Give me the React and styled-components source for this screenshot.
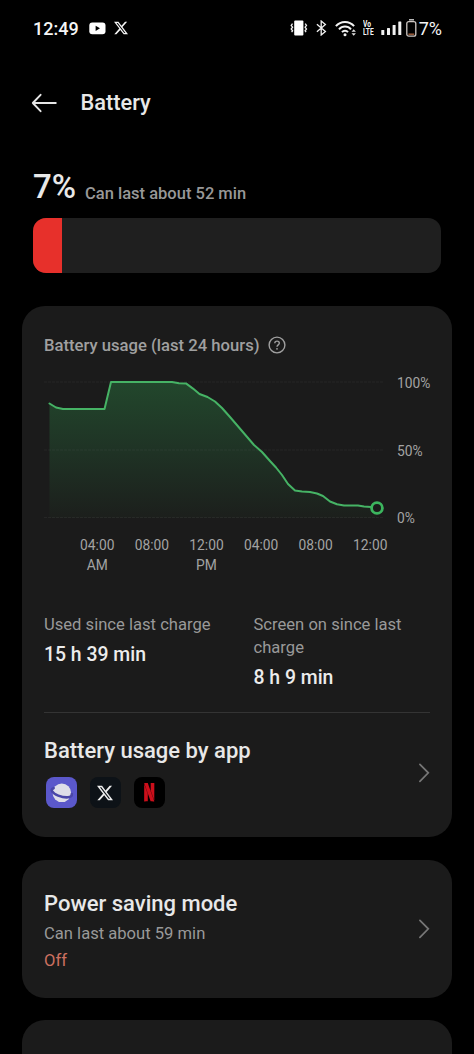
import React from 'react';
import styled, { createGlobalStyle } from 'styled-components';
import { SiX, SiNetflix } from 'react-icons/si';

const levels = [
  [5.5, 28.5], [12, 32.5], [19, 34], [60.5, 34], [67, 7], [128, 7], [135, 8.2], [142, 8.4],
  [149, 13.6], [155.5, 19], [163.5, 22], [171, 26.5], [178, 33], [186, 42], [210, 70], [218, 77],
  [226, 86], [232, 92.5], [238, 100], [244, 109], [251, 115.5], [258, 116.5], [266, 117],
  [273, 118.5], [279, 121], [286, 126.5], [293, 129.3], [300, 130.5], [314, 130.5], [320, 131.5], [327, 132],
]

const hours = ['04:00 AM', '08:00', '12:00 PM', '04:00', '08:00', '12:00']

const Chart = () => {
  const line = levels.map( p => p.join(',') ).join(' ')
  return (
    <svg width="342" height="150" viewBox="0 0 342 150">
      <defs>
        <linearGradient id="fade" x1="0" y1="0" x2="0" y2="1">
          <stop offset="0" stopColor="#22472c" />
          <stop offset="0.5" stopColor="#1f3325" />
          <stop offset="1" stopColor="#1c1f1c" />
        </linearGradient>
      </defs>
      <polygon points={`5.5,143 ${line} 333,133 333,143`} fill="url(#fade)" />
      { [7, 75, 142.5].map( y => (
        <line key={y} x1="0" x2="340" y1={y} y2={y} stroke="#fff" strokeOpacity="0.05" strokeDasharray="3 1" />
      ))}
      <polyline points={line} fill="none" stroke="#46b365" strokeWidth="2" strokeLinejoin="round" strokeLinecap="round" />
      <circle cx="333" cy="133" r="5.4" fill="#1b1b1b" stroke="#3cb55e" strokeWidth="2.8" />
    </svg>
  )
}

const Chevron = () => (
  <svg width="12" height="20" viewBox="0 0 12 20" fill="none" stroke="#777" strokeWidth="1.7" strokeLinecap="round">
    <path d="M1.9 1.3 10.3 9.8 1.9 18.3" />
  </svg>
)

const Youtube = () => (
  <svg width="17" height="13" viewBox="0 0 17 13">
    <rect x="0.3" y="0.5" width="16.2" height="11.8" rx="3" fill="#fff" />
    <path d="M6.6 3.7v5.2l4.4-2.6z" fill="#000" />
  </svg>
)

const Vibrate = () => (
  <svg width="18" height="16" viewBox="0 0 18 16" fill="none" stroke="#f2f2f2" strokeWidth="1.3">
    <rect x="4.2" y="0.4" width="9.2" height="15.2" rx="1" fill="#fff" stroke="none" />
    <path d="M2.5 3.6 1.2 5.4l1.4 1.8L1.2 9l1.4 1.8-1 1.4M15.2 3.6l1.3 1.8-1.4 1.8L16.5 9l-1.4 1.8 1 1.4" />
  </svg>
)

const Bluetooth = () => (
  <svg width="11" height="16" viewBox="0 0 11 16" fill="none" stroke="#f2f2f2" strokeWidth="1.3">
    <path d="M.9 4.3 9.4 11.6 5.2 15V1l4.2 3.4L.9 11.7" />
  </svg>
)

const Wifi = () => (
  <svg width="22" height="17" viewBox="0 0 22 17" fill="none" stroke="#f2f2f2" strokeWidth="2">
    <path d="M.9 6.1C5.7.5 14.3.5 19.1 6.1M4 9.3c3.2-3.8 8.8-3.8 12 0M7 12.2c1.7-1.9 4.3-1.9 6 0" />
    <circle cx="10" cy="14.7" r="1.5" fill="#f2f2f2" stroke="none" />
    <path d="M18.7 9.2l2.2 2.6h-4.4zM18.7 15.8l2.2-2.6h-4.4z" fill="#e0e0e0" stroke="none" />
  </svg>
)

const Signal = () => (
  <svg width="21" height="15" viewBox="0 0 21 15" fill="#f2f2f2">
    <rect x="0.3" y="9" width="3" height="5" rx=".5" />
    <rect x="6" y="7" width="3" height="7" rx=".5" />
    <rect x="11.6" y="4" width="3" height="10" rx=".5" />
    <rect x="17.3" y="0.4" width="3" height="13.6" rx=".5" />
  </svg>
)

const Cell = () => (
  <svg width="11" height="18" viewBox="0 0 11 18" fill="none">
    <path d="M3 .8h5" stroke="#ccc" strokeWidth="1.4" />
    <rect x="0.8" y="2.6" width="9" height="14.6" rx="2" stroke="#cfc8c4" strokeWidth="1.3" />
    <path d="M2.4 15.2h5.8" stroke="#a5603c" strokeWidth="1.4" />
  </svg>
)

const Help = () => (
  <svg width="18" height="18" viewBox="0 0 18 18" fill="none" stroke="#a0a0a0" strokeWidth="1.4">
    <circle cx="9" cy="9" r="7.9" />
    <path d="M6.8 7.3C6.8 4.4 11.3 4.5 11.3 7.2 11.3 8.8 9 8.9 9 10.7" />
    <circle cx="9" cy="12.8" r=".9" fill="#a0a0a0" stroke="none" />
  </svg>
)

const Planet = () => (
  <svg width="31" height="31" viewBox="0 0 31 31">
    <circle cx="15.8" cy="15.8" r="9.3" fill="#dedee8" />
    <path d="M7.6 11.2C3.8 12.4 6 16.2 12.2 18.6c7.2 2.7 14.4 2.4 13.6-1.6" fill="none" stroke="#4a47a8" strokeWidth="2.6" strokeLinecap="round" />
  </svg>
)

const App = () => (
  <Screen>
    <Page />
    <StatusBar>
      <Clock>12:49</Clock>
      <Youtube />
      <SiX size={14} />
      <Indicators>
        <Vibrate />
        <Bluetooth />
        <Wifi />
        <Volte><span>Vo</span><span>LTE</span></Volte>
        <Signal />
        <Cell />
      </Indicators>
      <Percent>7%</Percent>
    </StatusBar>

    <Header>
      <svg width="26" height="20" viewBox="0 0 26 20" fill="none" stroke="#e6e6e6" strokeWidth="1.9" strokeLinecap="round" strokeLinejoin="round">
        <path d="M9.6 1.8 1.8 10l7.8 8.2M1.8 10h23" />
      </svg>
      <Title>Battery</Title>
    </Header>

    <Summary>
      <Level>7%</Level>
      <Estimate>Can last about 52 min</Estimate>
    </Summary>
    <Gauge><Charge $level={7} /></Gauge>

    <Card $height={531}>
      <CardTitle>Battery usage (last 24 hours) <Help /></CardTitle>
      <Usage>
        <Chart />
        <Scale>
          <span>100%</span>
          <span>50%</span>
          <span>0%</span>
        </Scale>
      </Usage>
      <Hours>
        { hours.map( (hour, i) => <span key={i}>{hour}</span> )}
      </Hours>
      <Stats>
        <Stat>
          <Label>Used since last charge</Label>
          <Value>15 h 39 min</Value>
        </Stat>
        <Stat>
          <Label>Screen on since last charge</Label>
          <Value>8 h 9 min</Value>
        </Stat>
      </Stats>
      <Link>
        <div>
          <LinkTitle>Battery usage by app</LinkTitle>
          <Apps>
            <AppIcon $color="#5b58cb"><Planet /></AppIcon>
            <AppIcon $color="#0d1217"><SiX size={16} color="#eee" /></AppIcon>
            <AppIcon $color="#000"><SiNetflix size={18.5} color="#cc0f1b" /></AppIcon>
          </Apps>
        </div>
        <Chevron />
      </Link>
    </Card>

    <Card $height={138}>
      <Mode>
        <div>
          <LinkTitle>Power saving mode</LinkTitle>
          <Detail>Can last about 59 min</Detail>
          <Detail $color="#cb7060">Off</Detail>
        </div>
        <Chevron />
      </Mode>
    </Card>

    <Card $height={138} />
  </Screen>
)

const Page = createGlobalStyle`
  * { box-sizing: border-box; }
  body {
    margin: 0;
    background: #000;
  }
  svg {
    display: block;
    flex: none;
  }
`

const Screen = styled.div`
  width: 474px;
  height: 1054px;
  overflow: hidden;
  background: #000;
  color: #e8e8e8;
  font-family: Roboto, sans-serif;
  white-space: nowrap;
`

const StatusBar = styled.div`
  display: flex;
  align-items: center;
  height: 56px;
  padding: 0 32px 0 33px;
  color: #f5f5f5;
`

const Clock = styled.span`
  width: 56px;
  font-size: 18px;
  font-weight: 500;

  & + svg { margin-right: 8px; }
`

const Indicators = styled.div`
  display: flex;
  align-items: center;
  gap: 8px;
  margin-left: auto;

  svg:last-child { margin-left: -4px; }
`

const Volte = styled.div`
  display: flex;
  flex-direction: column;
  width: 12px;
  margin: 0 -2px;
  font-size: 8.5px;
  font-weight: 700;
  line-height: 8px;

  span {
    transform: scaleX(0.78);
    transform-origin: left;
  }
`

const Percent = styled.span`
  margin-left: 2px;
  font-size: 18px;
`

const Header = styled.div`
  display: flex;
  align-items: center;
  gap: 23.5px;
  height: 94px;
  padding-left: 31px;
`

const Title = styled.h1`
  margin: -1px 0 0;
  font-size: 21.8px;
  font-weight: 500;
`

const Summary = styled.div`
  display: flex;
  align-items: flex-start;
  gap: 9px;
  height: 67.5px;
  padding: 16px 33px 0;
`

const Level = styled.span`
  font-size: 33px;
  font-weight: 500;
  line-height: 41px;
`

const Estimate = styled.span`
  margin-top: 16px;
  color: #989898;
  font-size: 16.5px;
  font-weight: 500;
  line-height: 23px;
`

const Gauge = styled.div`
  width: 408px;
  height: 55px;
  margin: 0 33px 33.5px;
  border-radius: 13px;
  background: #1f1f1f;
  overflow: hidden;
`

const Charge = styled.div`
  width: ${props => props.$level}%;
  height: 100%;
  background: #e7302b;
`

const Card = styled.section`
  width: 430px;
  height: ${props => props.$height}px;
  margin: 0 22px 22.5px;
  padding: 0 22px;
  border-radius: 23px;
  background: #1b1b1b;
`

const CardTitle = styled.div`
  display: flex;
  align-items: center;
  gap: 8px;
  height: 69px;
  padding-top: 9px;
  color: #a0a0a0;
  font-size: 16.65px;
  font-weight: 500;
`

const Usage = styled.div`
  display: flex;
  gap: 11px;
`

const Scale = styled.div`
  display: flex;
  flex-direction: column;
  gap: 47.5px;
  color: #a3a3a3;
  font-size: 13.8px;
  line-height: 20px;
  margin-top: -2px;
`

const Hours = styled.div`
  display: grid;
  grid-template-columns: repeat(6, 54.6px);
  height: 77px;
  margin: 8px 0 0 26px;
  color: #a3a3a3;
  font-size: 13.8px;
  line-height: 19.5px;
  text-align: center;

  span {
    padding: 0 8px;
    white-space: normal;
  }
`

const Stats = styled.div`
  display: grid;
  grid-template-columns: 209.5px 1fr;
  height: 100px;
  border-bottom: 1px solid #343434;
`

const Stat = styled.div`
  white-space: normal;
`

const Label = styled.div`
  color: #999;
  font-size: 16.6px;
  line-height: 23px;
`

const Value = styled.div`
  padding-top: 6px;
  color: #ececec;
  font-size: 19.4px;
  font-weight: 500;
  line-height: 25px;
`

const Link = styled.div`
  display: flex;
  align-items: center;
  justify-content: space-between;
  height: 119px;
`

const LinkTitle = styled.h2`
  margin: 0;
  font-size: 22px;
  font-weight: 500;
  line-height: 28px;
`

const Apps = styled.div`
  display: flex;
  gap: 12.8px;
  padding: 12px 0 0 2px;
`

const AppIcon = styled.div`
  display: flex;
  align-items: center;
  justify-content: center;
  width: 31px;
  height: 31px;
  border-radius: 8px;
  background: ${props => props.$color};
`

const Mode = styled(Link)`
  height: 138px;

  h2 { padding-top: 5px; }
`

const Detail = styled.div`
  padding-top: 4px;
  color: ${props => props.$color || '#999'};
  font-size: 16.6px;
  line-height: 23px;
`

export default App;
